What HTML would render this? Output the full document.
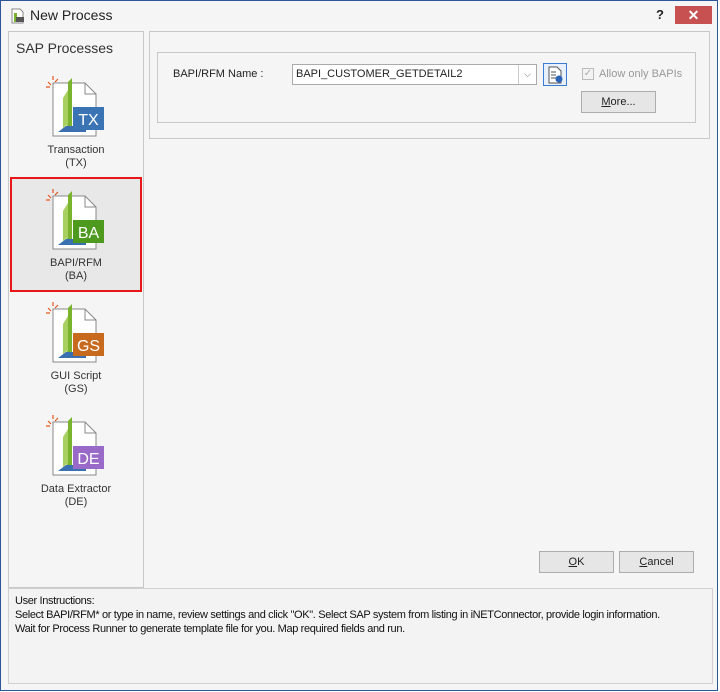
<!DOCTYPE html>
<html><head><style>
*{margin:0;padding:0;box-sizing:border-box}
body{width:720px;height:692px;background:#fff;font-family:"Liberation Sans",sans-serif;font-size:11px;color:#222;position:relative;overflow:hidden}
.a{position:absolute}
.win{left:0;top:0;width:718px;height:691px;background:#f5f5f5;border:1px solid #2b579a}
.lbl{text-align:center;width:134px;left:9px;font-size:11px;line-height:13px;color:#333}
.btn{background:#e6e6e6;border:1px solid #adadad;text-align:center;font-size:11px;line-height:20px;height:22px}
</style></head><body>
<div class="a win"></div>
<svg class="a" style="left:10px;top:8px" width="16" height="16"><path d="M2 1h8l3 3v11H2z" fill="#fff" stroke="#888"/><rect x="4" y="5" width="3" height="9" fill="#7ab32e"/><rect x="6" y="9" width="8" height="5" fill="#555"/></svg>
<div class="a" style="left:30px;top:7px;font-size:14px;color:#222">New Process</div>
<div class="a" style="left:656px;top:7px;font-size:13px;font-weight:bold">?</div>
<div class="a" style="left:675px;top:6px;width:37px;height:18px;background:#c75050;color:#fff;text-align:center;font-size:14px;line-height:18px;font-weight:bold">✕</div>

<div class="a" style="left:8px;top:31px;width:136px;height:557px;border:1px solid #c8c8c8;background:#f5f5f5"></div>
<div class="a" style="left:16px;top:40px;font-size:14px;color:#333">SAP Processes</div>
<div class="a" style="left:10px;top:177px;width:132px;height:115px;border:2px solid #e81818;background:#e8e8e8"></div>

<svg class="a" style="left:44px;top:74px" width="64" height="64"><g>
<path d="M4 8l3 3M9 2v4M14 5l-3 3M2 13h4" stroke="#e8561e" stroke-width="1.2"/>
<path d="M9 9h32l11 11v42H9z" fill="#fff" stroke="#888"/><path d="M41 9v11h11" fill="none" stroke="#888"/>
<path d="M24 8l4-4v50h-7l3-4z" fill="#7ab32e"/><path d="M19 24l5-8v34l-5 4z" fill="#a8d060"/>
<path d="M14 58l8-6h20v6z" fill="#3a6fb0"/>
<rect x="29" y="33" width="31" height="23" fill="#3a74b4"/><text x="44.5" y="51" font-family="Liberation Sans" font-size="16" fill="#fff" text-anchor="middle">TX</text></g></svg>
<svg class="a" style="left:44px;top:187px" width="64" height="64"><g>
<path d="M4 8l3 3M9 2v4M14 5l-3 3M2 13h4" stroke="#e8561e" stroke-width="1.2"/>
<path d="M9 9h32l11 11v42H9z" fill="#fff" stroke="#888"/><path d="M41 9v11h11" fill="none" stroke="#888"/>
<path d="M24 8l4-4v50h-7l3-4z" fill="#7ab32e"/><path d="M19 24l5-8v34l-5 4z" fill="#a8d060"/>
<path d="M14 58l8-6h20v6z" fill="#3a6fb0"/>
<rect x="29" y="33" width="31" height="23" fill="#4e9a1e"/><text x="44.5" y="51" font-family="Liberation Sans" font-size="16" fill="#fff" text-anchor="middle">BA</text></g></svg>
<svg class="a" style="left:44px;top:300px" width="64" height="64"><g>
<path d="M4 8l3 3M9 2v4M14 5l-3 3M2 13h4" stroke="#e8561e" stroke-width="1.2"/>
<path d="M9 9h32l11 11v42H9z" fill="#fff" stroke="#888"/><path d="M41 9v11h11" fill="none" stroke="#888"/>
<path d="M24 8l4-4v50h-7l3-4z" fill="#7ab32e"/><path d="M19 24l5-8v34l-5 4z" fill="#a8d060"/>
<path d="M14 58l8-6h20v6z" fill="#3a6fb0"/>
<rect x="29" y="33" width="31" height="23" fill="#c86a1e"/><text x="44.5" y="51" font-family="Liberation Sans" font-size="16" fill="#fff" text-anchor="middle">GS</text></g></svg>
<svg class="a" style="left:44px;top:413px" width="64" height="64"><g>
<path d="M4 8l3 3M9 2v4M14 5l-3 3M2 13h4" stroke="#e8561e" stroke-width="1.2"/>
<path d="M9 9h32l11 11v42H9z" fill="#fff" stroke="#888"/><path d="M41 9v11h11" fill="none" stroke="#888"/>
<path d="M24 8l4-4v50h-7l3-4z" fill="#7ab32e"/><path d="M19 24l5-8v34l-5 4z" fill="#a8d060"/>
<path d="M14 58l8-6h20v6z" fill="#3a6fb0"/>
<rect x="29" y="33" width="31" height="23" fill="#9a6ac8"/><text x="44.5" y="51" font-family="Liberation Sans" font-size="16" fill="#fff" text-anchor="middle">DE</text></g></svg>

<div class="a lbl" style="top:144px">Transaction<br>(TX)</div>
<div class="a lbl" style="top:257px">BAPI/RFM<br>(BA)</div>
<div class="a lbl" style="top:370px">GUI Script<br>(GS)</div>
<div class="a lbl" style="top:483px">Data Extractor<br>(DE)</div>

<div class="a" style="left:149px;top:31px;width:561px;height:108px;border:1px solid #c8c8c8"></div>
<div class="a" style="left:157px;top:52px;width:539px;height:71px;border:1px solid #c8c8c8"></div>
<div class="a" style="left:173px;top:68px">BAPI/RFM Name :</div>
<div class="a" style="left:292px;top:64px;width:245px;height:21px;background:#fff;border:1px solid #aaa;padding:3px 3px;line-height:13px">BAPI_CUSTOMER_GETDETAIL2</div>
<div class="a" style="left:518px;top:65px;width:18px;height:19px;border-left:1px solid #ccc;text-align:center;color:#666;font-size:9px;line-height:19px">⌵</div>
<div class="a" style="left:543px;top:63px;width:24px;height:23px;border:1px solid #3a7bd5;background:#e8f0fb"></div>
<svg class="a" style="left:547px;top:66px" width="16" height="18"><path d="M2 1h8l4 4v12H2z" fill="#fff" stroke="#555"/><path d="M4 6h5M4 9h5M4 12h5" stroke="#555"/><circle cx="12" cy="13" r="3.5" fill="#2a64b8"/></svg>
<div class="a" style="left:582px;top:68px;width:12px;height:12px;border:1px solid #bbb;background:#f3f3f3;color:#aaa;font-size:10px;line-height:10px;text-align:center">✓</div>
<div class="a" style="left:599px;top:68px;color:#999">Allow only BAPIs</div>
<div class="a btn" style="left:581px;top:91px;width:75px"><u>M</u>ore...</div>

<div class="a btn" style="left:539px;top:551px;width:75px"><u>O</u>K</div>
<div class="a btn" style="left:619px;top:551px;width:75px"><u>C</u>ancel</div>

<div class="a" style="left:8px;top:588px;width:705px;height:96px;border:1px solid #d0d0d0;background:#f3f3f3;padding:5px 6px;line-height:14px;font-size:11px;color:#111;white-space:nowrap;letter-spacing:-0.35px">User Instructions:<br>Select BAPI/RFM* or type in name, review settings and click "OK". Select SAP system from listing in iNETConnector, provide login information.<br>Wait for Process Runner to generate template file for you. Map required fields and run.</div>
</body></html>
